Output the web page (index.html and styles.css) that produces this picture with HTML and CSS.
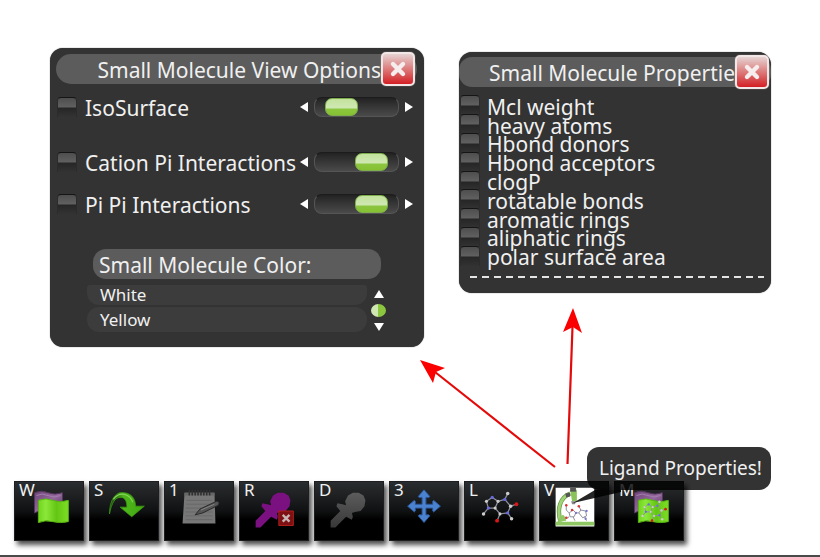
FILE: index.html
```html
<!DOCTYPE html>
<html lang="en">
<head>
<meta charset="utf-8">
<title>Small Molecule Viewer</title>
<link rel="stylesheet" href="styles.css">
</head>
<body>
<svg class="defs" aria-hidden="true">
  <defs>
    <linearGradient id="purple" x1="0" y1="0" x2="1" y2="1"><stop offset="0" stop-color="#6d4577"/><stop offset=".5" stop-color="#93689c"/><stop offset="1" stop-color="#553060"/></linearGradient>
    <linearGradient id="green" x1="0" y1="0" x2="1" y2="0"><stop offset="0" stop-color="#72d51d"/><stop offset=".25" stop-color="#8be83a"/><stop offset=".6" stop-color="#64c614"/><stop offset="1" stop-color="#7ede25"/></linearGradient>
    <linearGradient id="swoosh" x1="0" y1="0" x2="1" y2="0"><stop offset="0" stop-color="#2f8b0a" stop-opacity=".3"/><stop offset=".4" stop-color="#4fb71c"/><stop offset="1" stop-color="#3fa60f"/></linearGradient>
    <linearGradient id="grey" x1="0" y1="0" x2="0" y2="1"><stop offset="0" stop-color="#5c5c5c"/><stop offset="1" stop-color="#383838"/></linearGradient>
    <symbol id="flags" viewBox="0 0 70 60">
      <path d="M20 11q7-3 14 0t15 0v20q-8 3-15 0t-14 1z" fill="url(#purple)" stroke="#54345c"/>
      <path d="M22 14q6-3 12 0t13 0" fill="none" stroke="#a57dae"/>
      <path d="M24 19q8-3 15 0t16 0v22q-8 2-16 0t-15 1z" fill="url(#green)" stroke="#57b512"/>
    </symbol>
    <symbol id="dropper" viewBox="0 0 70 60">
      <path d="M34 14l5-3h6l5 3 2 5-1 6-4 5-6 1-3 1 1 4-1 3-6-3-8 8-3 3h-5v-7l10-10-4-5 1-3 5 1 4 1-1-4z"/>
    </symbol>
    <symbol id="molecule" viewBox="0 0 70 60">
      <path d="M44 12l-3 6-7 2-6-4-6 4 2 7h7l3-7M24 27l-5 6M31 27l5 6 8-1 3-7-6-7M47 25l6-2M44 32l4 6M36 33l-3 7" fill="none" stroke="#8c8f99" stroke-width="1.3"/>
      <g fill="#ccc"><circle cx="44" cy="12" r="1.8"/><circle cx="22" cy="20" r="1.6"/><circle cx="34" cy="20" r="1.6"/><circle cx="31" cy="27" r="1.6"/><circle cx="19" cy="33" r="1.8"/><circle cx="47" cy="25" r="1.8"/><circle cx="48" cy="38" r="1.8"/><circle cx="36" cy="33" r="1.6"/></g>
      <g fill="#6a6ae0"><circle cx="41" cy="18" r="1.7"/><circle cx="28" cy="16" r="1.7"/><circle cx="24" cy="27" r="1.7"/><circle cx="44" cy="32" r="1.7"/></g>
      <g fill="#d81818"><circle cx="53" cy="23" r="2"/><circle cx="33" cy="40" r="2"/></g>
    </symbol>
    <symbol id="close" viewBox="0 0 30 30">
      <path d="M10 10l10 10M20 10L10 20" stroke="#f6eeee" stroke-width="4.4" stroke-linecap="round"/>
    </symbol>
  </defs>
</svg>

<main class="workspace">
  <section class="panel options" aria-labelledby="view-title">
    <header class="panel-title">
      <h2 id="view-title">Small Molecule View Options</h2>
      <button class="close" aria-label="Close"><svg><use href="#close"/></svg></button>
    </header>
    <div class="rows">
      <div class="row wide">
        <input type="checkbox" id="iso"><label for="iso">IsoSurface</label>
        <button class="step" aria-label="Decrease"><svg viewBox="0 0 8 10"><path d="M8 0v10L0 5z"/></svg></button>
        <input type="range" min="0" max="100" value="20" aria-label="IsoSurface level">
        <button class="step" aria-label="Increase"><svg viewBox="0 0 8 10"><path d="M0 0v10l8-5z"/></svg></button>
      </div>
      <div class="row">
        <input type="checkbox" id="cation"><label for="cation">Cation Pi Interactions</label>
        <button class="step" aria-label="Decrease"><svg viewBox="0 0 8 10"><path d="M8 0v10L0 5z"/></svg></button>
        <input type="range" min="0" max="100" value="80" aria-label="Cation Pi level">
        <button class="step" aria-label="Increase"><svg viewBox="0 0 8 10"><path d="M0 0v10l8-5z"/></svg></button>
      </div>
      <div class="row">
        <input type="checkbox" id="pipi"><label for="pipi">Pi Pi Interactions</label>
        <button class="step" aria-label="Decrease"><svg viewBox="0 0 8 10"><path d="M8 0v10L0 5z"/></svg></button>
        <input type="range" min="0" max="100" value="80" aria-label="Pi Pi level">
        <button class="step" aria-label="Increase"><svg viewBox="0 0 8 10"><path d="M0 0v10l8-5z"/></svg></button>
      </div>
    </div>
    <div class="colors">
      <h3>Small Molecule Color:</h3>
      <div class="picker">
        <div class="choices">
          <button class="choice first">White</button>
          <button class="choice">Yellow</button>
        </div>
        <div class="scroller">
          <button class="step" aria-label="Scroll up"><svg viewBox="0 0 10 8"><path d="M0 8h10L5 0z"/></svg></button>
          <span class="knob"></span>
          <button class="step" aria-label="Scroll down"><svg viewBox="0 0 10 8"><path d="M0 0h10L5 8z"/></svg></button>
        </div>
      </div>
    </div>
  </section>

  <section class="panel properties" aria-labelledby="prop-title">
    <header class="panel-title">
      <h2 id="prop-title">Small Molecule Propertie</h2>
      <button class="close" aria-label="Close"><svg><use href="#close"/></svg></button>
    </header>
    <ul class="checks">
      <li><input type="checkbox" id="p1"><label for="p1">Mcl weight</label></li>
      <li><input type="checkbox" id="p2"><label for="p2">heavy atoms</label></li>
      <li><input type="checkbox" id="p3"><label for="p3">Hbond donors</label></li>
      <li><input type="checkbox" id="p4"><label for="p4">Hbond acceptors</label></li>
      <li><input type="checkbox" id="p5"><label for="p5">clogP</label></li>
      <li><input type="checkbox" id="p6"><label for="p6">rotatable bonds</label></li>
      <li><input type="checkbox" id="p7"><label for="p7">aromatic rings</label></li>
      <li><input type="checkbox" id="p8"><label for="p8">aliphatic rings</label></li>
      <li><input type="checkbox" id="p9"><label for="p9">polar surface area</label></li>
    </ul>
    <hr>
  </section>
</main>

<svg class="arrows" viewBox="0 0 820 557" aria-hidden="true">
  <g stroke="#e40a0a" stroke-width="2.2"><path d="M555 467L435 372M567.500 464L572.500 327"/></g>
  <path d="M420 360l25 8-9 4-3 11zM573 308l9 25-9-6-10 5z" fill="#fb0000"/>
</svg>

<nav class="toolbar" aria-label="Tools">
  <button class="tile"><span>W</span><svg viewBox="0 0 70 60"><use href="#flags"/></svg></button>
  <button class="tile"><span>S</span><svg viewBox="0 0 70 60">
    <path d="M20 33C20 19 26 10 34 11c8 0 13 6 13 14h9L43 36 31 26h7c0-6-2-10-6-10-6-1-10 6-12 17z" fill="url(#swoosh)" stroke="#3c9c12" stroke-width=".8"/>
    <path d="M24 18q5-7 12-5 6 2 8 8" fill="none" stroke="#86d85a" stroke-width="1.2"/></svg></button>
  <button class="tile"><span>1</span><svg viewBox="0 0 70 60">
    <path d="M20 11h31l1 32H18z" fill="#777"/><path d="M20 11h31v3H20z" fill="#666"/>
    <path d="M22 19h26M22 23h26M21 27h28M21 31h28M21 35h28M21 39h28" stroke="#666" stroke-width=".9"/>
    <path d="M25 8v6M28 8v6M31 8v6M34 8v6M37 8v6M40 8v6M43 8v6M46 8v6" stroke="#303030" stroke-width="1.6"/>
    <path d="M31 34l5-6 17-8q4 0 2 4l-16 8z" fill="#555" stroke="#292929"/><path d="M37 29l14-6" stroke="#858585"/></svg></button>
  <button class="tile"><span>R</span><svg viewBox="0 0 70 60"><use href="#dropper" fill="#7b1180"/>
    <path d="M40 30h15v15H40z" fill="#7c1012" stroke="#b3201c"/><path d="M44 34l7 7M51 34l-7 7" stroke="#c9b4b4" stroke-width="2.4"/></svg></button>
  <button class="tile"><span>D</span><svg viewBox="0 0 70 60"><use href="#dropper" fill="url(#grey)"/></svg></button>
  <button class="tile"><span>3</span><svg viewBox="0 0 70 60">
    <path d="M35 8l6 7-1 1h-3v7h7v-3l1-1 7 6-7 6-1-1v-3h-7v7h3l1 1-6 7-6-7 1-1h3v-7h-7v3l-1 1-7-6 7-6 1 1v3h7v-7h-3l-1-1z" fill="#4b82cf" stroke="#2b5797"/></svg></button>
  <button class="tile"><span>L</span><svg viewBox="0 0 70 60"><use href="#molecule"/></svg></button>
  <div class="anchor">
    <button class="tile" aria-describedby="tip"><span>V</span><svg viewBox="0 0 70 60">
      <path d="M16 6h40v40H16z" fill="#fff"/>
      <path d="M31 12c-10 4-14 15-10 29" fill="none" stroke="#67934a" stroke-width="4.500"/>
      <path d="M31 12c-10 4-14 15-10 29" fill="none" stroke="#9fd474" stroke-width="3"/>
      <path d="M18 41q6-13 9-1zM16 41h40v4H16z" fill="#8fc862"/>
      <path d="M26 12l5-1v4l-4 1z" fill="#555"/><path d="M31 8h7v12h-5z" fill="#8bc35b"/><path d="M31 6h6v4h-6z" fill="#555"/><path d="M32 20h5l-1 3h-3z" fill="#888"/>
      <path d="M27 24l0 5 3 3 4-3 3 3-2 4h-4l-1-4M36 32h4l2-3 5 1 1 5-4 2-4-5M42 29l-2-4M30 36l-3 2M34 36l2 4M46 36l2 4" fill="none" stroke="#8b8b98"/>
      <g fill="#d33"><circle cx="27" cy="24" r="1.300"/><circle cx="33" cy="29" r="1.300"/><circle cx="40" cy="25" r="1.300"/><circle cx="27" cy="37" r="1.300"/></g>
      <g fill="#77c"><circle cx="37" cy="32" r="1.200"/><circle cx="48" cy="30" r="1.200"/><circle cx="47" cy="38" r="1.200"/></g></svg></button>
    <div class="tooltip" id="tip" role="tooltip">Ligand Properties!
      <svg viewBox="0 0 60 20"><path d="M0 16L22 3h26v2z"/></svg>
    </div>
  </div>
  <button class="tile"><span>M</span><svg viewBox="0 0 70 60"><use href="#flags"/><use href="#molecule" x="15" y="12" width="49" height="42"/></svg></button>
</nav>
</body>
</html>
```

FILE: styles.css
```css
* { box-sizing: border-box; }

body {
  position: relative;
  display: flex;
  flex-direction: column;
  justify-content: space-between;
  min-height: 100vh;
  margin: 0;
  background: #fff;
  color: #f0f0f0;
  font-family: "Noto Sans", sans-serif;
  font-size: 21px;
}

h2, h3, ul { margin: 0; padding: 0; font-size: 21px; font-weight: 400; list-style: none; }
button { margin: 0; padding: 0; border: 0; background: none; color: inherit; font: inherit; }
svg { display: block; }
.defs { position: absolute; width: 0; height: 0; }

.workspace {
  display: grid;
  grid-template-columns: 374fr 312fr;
  gap: 35px;
  align-items: start;
  padding: 48px 49px 0 50px;
}

.panel {
  background: #333;
  border-radius: 13px;
  box-shadow: 0 0 1px #333;
}
.options { padding: 6px 7px 15px 6px; }
.properties { margin-top: 4px; padding: 5px 0 15px; }

.panel-title {
  display: flex;
  align-items: center;
  justify-content: flex-end;
  height: 30px;
  padding-right: 2px;
  border-radius: 15px;
  background: #5c5c5c;
  white-space: nowrap;
}
.panel-title h2 { padding-top: 2px; }
.properties .panel-title { border-radius: 13px; }

.close {
  flex: none;
  width: 34px;
  height: 34px;
  border: 2px solid #f3e6e6;
  border-radius: 5px;
  background: linear-gradient(#e6d3d3, #dd7b7b 50%, #d31f24);
  box-shadow: 0 0 1px #ddd;
}
.close svg { width: 30px; height: 30px; }

.rows { display: grid; gap: 22px; padding-top: 13px; }
.row { display: flex; align-items: center; height: 20px; padding: 0 4px 0 1px; }
.row.wide { margin-bottom: 13px; }
.row label { flex: 1; padding: 2px 0 0 8px; white-space: nowrap; }

input[type="checkbox"] {
  flex: none;
  appearance: none;
  width: 20px;
  height: 20px;
  margin: 0;
  border: 1px solid #2b2b2b;
  border-top-color: #151515;
  border-bottom: 0;
  border-radius: 4px 4px 0 0;
  background: linear-gradient(#4e4e4e, #606060 9px, #262626 10px, #333);
}

.step { flex: none; width: 8px; height: 10px; }
.step svg { width: 100%; height: 100%; fill: #fff; }

input[type="range"] {
  flex: none;
  appearance: none;
  width: 85px;
  height: 20px;
  margin: 0 6px;
  border: 1px solid #555;
  border-top-color: #1c1c1c;
  border-radius: 8px;
  background: linear-gradient(#222, #333 40%, #4a4a4a);
}
input[type="range"]::-webkit-slider-thumb {
  appearance: none;
  width: 33px;
  height: 18px;
  border: 1px solid #7fae4c;
  border-radius: 7px;
  background: linear-gradient(#c3e29d, #cfe8b2 9px, #8cc63f 10px, #86c032);
}

.colors { padding: 35px 31px 0; }
.colors h3 {
  height: 30px;
  margin: 0 5px 0 6px;
  padding-left: 6px;
  border-radius: 13px;
  background: #5c5c5c;
  line-height: 32px;
}
.picker { display: flex; gap: 4px; padding-top: 6px; }
.choices { display: grid; flex: 1; gap: 2px; }
.choice {
  height: 25px;
  padding-left: 13px;
  border-radius: 12px;
  background: #3c3c3c;
  font-size: 17px;
  line-height: 25px;
  text-align: left;
}
.choice.first { height: 20px; border-radius: 3px 3px 12px 12px; line-height: 16px; }
.scroller { display: flex; flex-direction: column; align-items: center; gap: 6px; padding-top: 5px; }
.scroller .step { width: 10px; height: 8px; }
.knob {
  width: 15px;
  height: 13px;
  border-radius: 50%;
  background: linear-gradient(90deg, #cfe8b2 45%, #8cc63f 50%);
}

.checks { display: grid; grid-auto-rows: 1fr; height: 169px; margin-top: 9px; padding-left: 1px; }
.checks li { display: flex; align-items: center; min-height: 0; line-height: 18px; }
.checks label { padding: 3px 0 0 7px; }

hr {
  height: 2px;
  margin: 11px 7px 0 11px;
  border: 0;
  background: repeating-linear-gradient(90deg, #e4e4e4 0 7px, transparent 7px 12px);
}

.arrows { position: absolute; inset: 0; width: 100%; pointer-events: none; fill: none; }

.toolbar {
  display: flex;
  gap: 5px;
  padding: 0 14px 14px;
  border-bottom: 2px solid #4a4a4a;
}
.tile {
  display: grid;
  width: 70px;
  height: 60px;
  border: 1px solid #1c1e1f;
  background: linear-gradient(#2a2d2f, #101112 50%, #000 65%);
  box-shadow: 3px 4px 5px rgba(0, 0, 0, .7);
}
.tile > * { grid-area: 1 / 1; }
.tile span { padding-left: 4px; font-size: 17px; line-height: 16px; text-align: left; }
.tile svg { width: 68px; height: 58px; }

.anchor { position: relative; z-index: 1; }
.tooltip {
  position: absolute;
  top: -34px;
  left: 48px;
  padding: 0 9px 0 12px;
  border-radius: 12px;
  background: rgba(0, 0, 0, .8);
  font-size: 19px;
  line-height: 43px;
  white-space: nowrap;
}
.tooltip svg { position: absolute; top: 40px; left: -14px; width: 60px; height: 20px; fill: rgba(0, 0, 0, .85); }
```
